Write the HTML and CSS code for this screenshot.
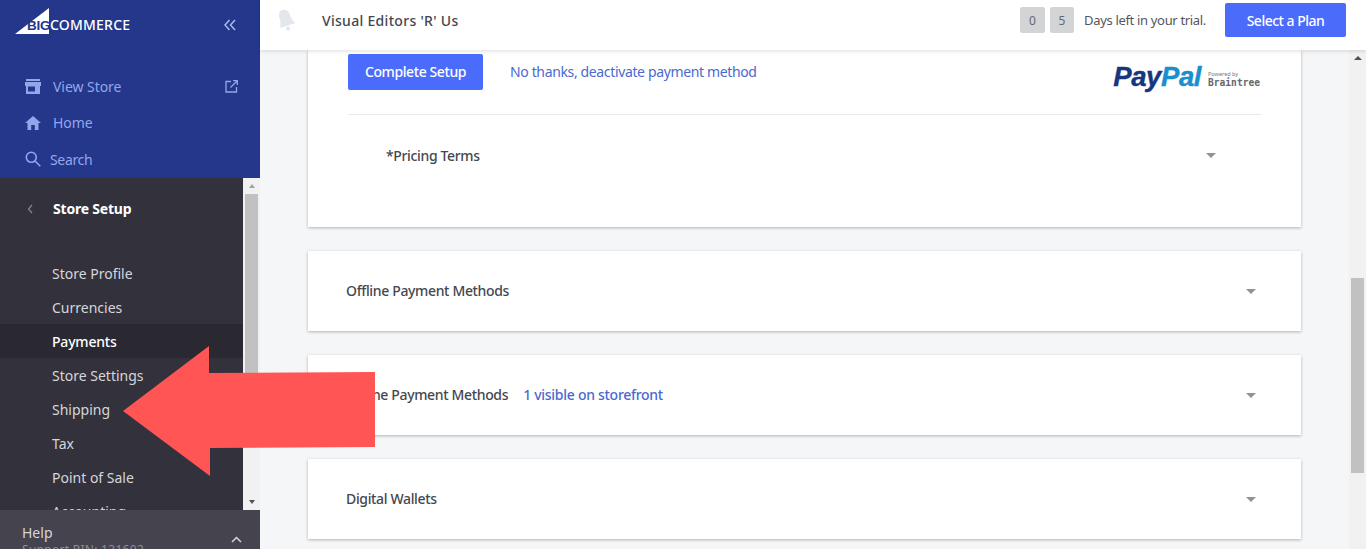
FILE: index.html
```html
<!DOCTYPE html>
<html lang="en">
<head>
<meta charset="utf-8">
<title>BigCommerce Payments</title>
<link rel="stylesheet" href="styles.css">
</head>
<body>
<div class="app">
  <aside class="sidebar">
    <div class="brand-block">
      <div class="brand-row">
        <div class="logo">
          <svg class="logo-mark" width="35" height="27" viewBox="0 0 35 27"><path d="M0 26 L34 0 V26 Z" fill="#fff"/></svg>
          <span class="logo-big">BIG</span>
          <span class="logo-commerce">COMMERCE</span>
        </div>
        <svg class="collapse" width="12" height="12" viewBox="0 0 12 12" fill="none" stroke="#a9b8f0" stroke-width="1.5"><path d="M5.5 1 L1 6 L5.5 11 M11 1 L6.5 6 L11 11"/></svg>
      </div>
      <nav class="top-nav">
        <a class="top-item view-store">
          <svg width="16" height="15" viewBox="0 0 16 15" fill="#93a6ec"><path d="M1 0h14v2H1zM0 3h16v4h-1V15H1V7H0zM3 7.500v5h7v-5z" fill-rule="evenodd"/></svg>
          <span class="top-label">View Store</span>
          <svg class="ext" width="13" height="13" viewBox="0 0 13 13" fill="none" stroke="#93a6ec" stroke-width="1.300"><path d="M6 1.500H1V12h10.500V7M5.500 7.500L12 1M8 .7h4.300V5"/></svg>
        </a>
        <a class="top-item home">
          <svg width="16" height="14" viewBox="0 0 16 14" fill="#93a6ec"><path d="M8 0L16 7H13.500V14H9.800V9H6.200V14H2.500V7H0z"/></svg>
          <span class="top-label">Home</span>
        </a>
        <a class="top-item search">
          <svg width="16" height="16" viewBox="0 0 16 16" fill="none" stroke="#93a6ec" stroke-width="1.600"><circle cx="6.300" cy="6.300" r="5"/><path d="M10 10L15.300 15.300"/></svg>
          <span class="top-label">Search</span>
        </a>
      </nav>
    </div>
    <div class="side-middle">
      <div class="side-scroll">
        <div class="side-head">
          <svg class="back" width="7" height="10" viewBox="0 0 7 10" fill="none" stroke="#85858d" stroke-width="1.200"><path d="M5 1L1.500 5L5 9"/></svg>
          <span class="side-title">Store Setup</span>
        </div>
        <ul class="side-list">
          <li>Store Profile</li>
          <li>Currencies</li>
          <li class="active">Payments</li>
          <li>Store Settings</li>
          <li>Shipping</li>
          <li>Tax</li>
          <li>Point of Sale</li>
          <li>Accounting</li>
        </ul>
      </div>
      <div class="side-bar">
        <span class="arrow-up small off"></span>
        <div class="side-track"><div class="side-thumb"></div></div>
        <span class="arrow-down small"></span>
      </div>
    </div>
    <div class="help">
      <div class="help-text">
        <div class="help-title">Help</div>
        <div class="help-pin">Support PIN: 131602</div>
      </div>
      <svg class="help-chev" width="11" height="7" viewBox="0 0 11 7" fill="none" stroke="#d5d5da" stroke-width="1.500"><path d="M1 6L5.500 1.500L10 6"/></svg>
    </div>
  </aside>

  <div class="main">
    <header class="topbar">
      <svg class="bell" width="20" height="22" viewBox="0 0 20 22" fill="#e3e6ea"><path d="M4 1.500C8 -.5 12 1.500 13 6C13.600 9 15.500 12 18.500 14L3 19C3.800 15 3.800 13 2.500 9C1.500 6 2 3 4 1.500Z"/><circle cx="11" cy="19.500" r="2"/></svg>
      <div class="store-name">Visual Editors 'R' Us</div>
      <div class="trial">
        <span class="digit">0</span>
        <span class="digit">5</span>
        <span class="trial-text">Days left in your trial.</span>
        <a class="plan-btn">Select a Plan</a>
      </div>
    </header>
    <div class="page">
      <div class="content">
        <section class="card card-first">
          <div class="setup-row">
            <a class="primary-btn">Complete Setup</a>
            <a class="link deactivate">No thanks, deactivate payment method</a>
            <div class="paypal">
              <span class="pp-word"><span class="pp-dark">Pay</span><span class="pp-light">Pal</span></span>
              <span class="bt"><span class="bt-small">Powered by</span><span class="bt-name">Braintree</span></span>
            </div>
          </div>
          <div class="pricing">
            <span class="row-title">*Pricing Terms</span>
            <span class="caret"></span>
          </div>
        </section>
        <section class="card row-card">
          <span class="row-title">Offline Payment Methods</span>
          <span class="caret"></span>
        </section>
        <section class="card row-card">
          <span class="row-title">Online Payment Methods</span>
          <span class="link visible-note">1 visible on storefront</span>
          <span class="caret"></span>
        </section>
        <section class="card row-card">
          <span class="row-title">Digital Wallets</span>
          <span class="caret"></span>
        </section>
        <section class="card row-card">
          <span class="row-title">Point of Sale</span>
          <span class="caret"></span>
        </section>
      </div>
      <div class="page-bar">
        <span class="arrow-up"></span>
        <div class="page-track"><div class="page-thumb"></div></div>
      </div>
    </div>
  </div>
</div>
<svg class="red-arrow" width="254" height="132" viewBox="0 0 254 132"><path d="M0 65L86 0L86 27L252 26L252 101L87 102L87 130Z" fill="#ff5555"/></svg>
</body>
</html>
```
FILE: styles.css
```css
* { box-sizing: border-box; }
html, body { margin: 0; height: 100%; overflow: hidden; }
body { font-family: "Noto Sans", "Open Sans", sans-serif; font-size: 14px; color: #45474f; background: #f5f6f8; }
a { text-decoration: none; }
ul { list-style: none; margin: 0; padding: 0; }

.app { display: flex; height: 549px; }

/* Sidebar */
.sidebar { width: 260px; flex: none; display: flex; flex-direction: column; background: #33323c; }
.brand-block { height: 178px; background: #25378a; padding: 0 22px 0 15px; flex: none; }
.brand-row { height: 50px; display: flex; align-items: center; justify-content: space-between; }
.logo { position: relative; width: 118px; height: 36px; }
.logo-mark { position: absolute; left: 0; top: 1px; }
.logo-big { position: absolute; left: 12px; top: 12px; font: 700 13.500px/14px "Liberation Sans", sans-serif; color: #25378a; letter-spacing: -.2px; }
.logo-commerce { position: absolute; left: 35px; top: 10px; font: 500 14px/16px "Noto Sans", sans-serif; color: #fff; letter-spacing: .2px; }
.collapse { margin: -1px 2px 0 0; }
.top-nav { display: flex; flex-direction: column; padding-top: 18px; padding-left: 10px; }
.top-item { display: flex; align-items: center; height: 36.500px; color: #93a6ec; font-size: 14px; letter-spacing: -.05px; }
.top-label { margin-left: 12px; }
.search .top-label { margin-left: 9px; letter-spacing: -.35px; }
.ext { margin-left: auto; }

.side-middle { flex: 1; display: flex; min-height: 0; }
.side-scroll { flex: 1; overflow: hidden; }
.side-head { height: 62px; display: flex; align-items: center; padding: 0 0 0 27px; }
.back { width: 7px; margin-right: 19px; flex: none; }
.side-title { color: #fff; font-weight: 700; font-size: 14px; letter-spacing: -.2px; margin-top: -1px; }
.side-list { padding-top: 16px; }
.side-list li { height: 34px; line-height: 35px; padding-left: 52px; color: #d6d6da; font-size: 14px; }
.side-list li.active { background: #2a2932; color: #fff; font-weight: 500; letter-spacing: -.2px; }
.side-bar { width: 17px; flex: none; background: #f1f1f1; display: flex; flex-direction: column; align-items: center; padding: 0 2px; }
.side-track { flex: 1; width: 100%; }
.side-thumb { height: 216px; background: #c1c1c1; }
.arrow-up, .arrow-down { display: block; width: 0; height: 0; border-left: 4px solid transparent; border-right: 4px solid transparent; flex: none; }
.arrow-up { border-bottom: 4px solid #505050; margin: 6px 0; }
.arrow-down { border-top: 4px solid #505050; margin: 6px 0; }
.arrow-up.off { border-bottom-color: #a3a3a3; }
.small { border-left-width: 3px; border-right-width: 3px; }

.help { height: 39px; flex: none; background: #44434e; display: flex; justify-content: space-between; padding: 14px 18px 0 22px; overflow: hidden; }
.help-title { color: #d6d6da; font-size: 14px; line-height: 18px; }
.help-pin { color: #8d8d96; font-size: 12px; line-height: 16px; letter-spacing: .3px; }
.help-chev { margin-top: 12px; }

/* Main */
.main { flex: 1; min-width: 0; display: flex; flex-direction: column; }
.topbar { height: 50px; flex: none; background: #fff; display: flex; align-items: center; padding: 0 20px 10px 17px; box-shadow: 0 1px 4px rgba(0,0,0,.14); position: relative; z-index: 2; }
.store-name { margin-left: 25px; font-size: 14px; font-weight: 500; letter-spacing: .3px; }
.trial { margin-left: auto; display: flex; align-items: center; }
.digit { width: 24.500px; height: 26px; background: #d3d4d6; border-radius: 2px; display: flex; align-items: center; justify-content: center; color: #66686e; font-size: 12px; margin-right: 5px; }
.trial-text { margin-left: 5px; font-size: 13px; color: #54565c; letter-spacing: -.33px; }
.plan-btn { margin-left: 19px; width: 121px; height: 34px; background: #4b6bfb; color: #fff; border-radius: 2px; display: flex; align-items: center; justify-content: center; font-size: 14px; font-weight: 500; letter-spacing: -.5px; }

.page { flex: 1; min-height: 0; display: flex; }
.content { flex: 1; min-width: 0; padding: 0 48px 0 48px; overflow: hidden; display: flex; flex-direction: column; gap: 24px; }
.card { background: #fff; box-shadow: 0 1px 3px rgba(0,0,0,.28); flex: none; }
.card-first { height: 177px; padding: 4px 40px 0; }
.setup-row { display: flex; align-items: center; height: 61px; padding-bottom: 25px; border-bottom: 1px solid #e8e9ec; }
.primary-btn { width: 135px; height: 36px; background: #4b6bfb; color: #fff; border-radius: 2px; display: flex; align-items: center; justify-content: center; font-size: 14px; font-weight: 500; flex: none; letter-spacing: -.4px; }
.link { color: #4a69d0; }
.deactivate { margin-left: 27px; font-size: 14px; letter-spacing: -.36px; }
.paypal { margin-left: auto; margin-top: 11px; margin-right: 1px; display: flex; align-items: center; }
.pp-word { font: italic 700 27.500px/28px "Liberation Sans", sans-serif; letter-spacing: -.4px; -webkit-text-stroke: .4px; }
.pp-dark { color: #17367f; }
.pp-light { color: #1a8fcf; }
.bt { margin: 4px 0 0 7px; display: flex; flex-direction: column; }
.bt-small { font-size: 5.500px; line-height: 7px; color: #777; }
.bt-name { font: 700 9.600px/10px "DejaVu Sans Mono", monospace; color: #66686c; }
.pricing { display: flex; align-items: center; justify-content: space-between; height: 81px; padding: 0 45px 0 38px; }
.caret { width: 0; height: 0; border-left: 5px solid transparent; border-right: 5px solid transparent; border-top: 5px solid #909296; }
.row-card { height: 80px; padding: 0 45px 0 38px; display: flex; align-items: center; }
.row-title { font-size: 14px; font-weight: 500; letter-spacing: -.35px; margin-top: -1px; }
.visible-note { margin-left: 15px; font-weight: 500; letter-spacing: -.28px; margin-top: -1px; }
.row-card .caret { margin-left: auto; }

.page-bar { width: 17px; flex: none; background: #f1f1f1; display: flex; flex-direction: column; align-items: center; padding: 0 2px; }
.page-track { flex: 1; width: 100%; padding-top: 212px; }
.page-thumb { height: 195px; background: #c1c1c1; }

/* Overlay annotation */
.red-arrow { position: absolute; left: 123px; top: 346px; z-index: 5; }
```
